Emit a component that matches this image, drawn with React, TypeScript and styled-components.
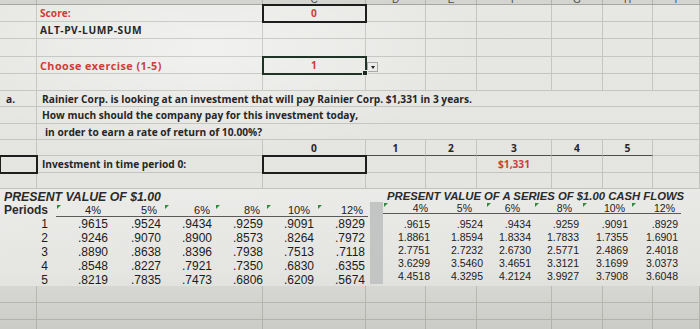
import React from "react";
import styled, { createGlobalStyle, css } from "styled-components";

const COLS = "37px 226px 103px 60px 51px 75px 51px 50px 47px";
const GRID = "rgba(110,110,105,0.28)";
const RED = "#cf3d3a";
const INK = "#262626";

const GlobalStyle = createGlobalStyle`
  html, body { margin: 0; padding: 0; }
  body { width: 700px; height: 329px; overflow: hidden; background: #dcdcd8; }
`;

const Page = styled.div`
  width: 700px;
  height: 329px;
  overflow: hidden;
  display: flex;
  flex-direction: column;
  background:
    radial-gradient(ellipse 55% 45% at 30% 15%, rgba(255, 255, 255, 0.45), rgba(255, 255, 255, 0) 70%),
    linear-gradient(180deg, #e7e7e4 0%, #e4e4e1 55%, #dbdbd7 82%, #cbcbc7 100%);
  font-family: "Open Sans", Lato, sans-serif;
`;

const HeaderStrip = styled.div`
  flex: none;
  display: grid;
  grid-template-columns: ${COLS};
  height: 4px;
  background: #d4d5d1;
  border-bottom: 1px solid #a6a7a3;
  overflow: hidden;
`;

const ColLetter = styled.div`
  border-right: 1px solid #b3b4b0;
  display: flex;
  justify-content: center;
  align-items: flex-end;
  overflow: hidden;
  font: 10px "Liberation Sans", sans-serif;
  color: #4a4a4a;
  span {
    line-height: 10px;
    transform: translateY(1px);
  }
`;

const SheetRow = styled.div<{ $h: number }>`
  flex: none;
  display: grid;
  grid-template-columns: ${COLS};
  height: ${(p) => p.$h}px;
`;

type CellProps = {
  $span?: number;
  $align?: "left" | "center";
  $tone?: "red" | "ink";
  $box?: "dark" | "green";
  $pad?: number;
  $under?: boolean;
  $size?: number;
  $track?: number;
};

const Cell = styled.div<CellProps>`
  grid-column: span ${(p) => p.$span ?? 1};
  position: relative;
  display: flex;
  align-items: center;
  justify-content: ${(p) => (p.$align === "center" ? "center" : "flex-start")};
  padding-left: ${(p) => p.$pad ?? 0}px;
  border-right: 1px solid ${GRID};
  border-bottom: 1px solid ${(p) => (p.$under ? "#4e4e4c" : GRID)};
  white-space: nowrap;
  font-size: ${(p) => p.$size ?? 10.2}px;
  font-weight: 700;
  letter-spacing: ${(p) => p.$track ?? 0}px;
  color: ${(p) => (p.$tone === "red" ? RED : INK)};
  ${(p) =>
    p.$box &&
    css`
      outline: 2px solid ${p.$box === "green" ? "#1f3326" : "#1e1e1e"};
      outline-offset: -1px;
      z-index: 1;
    `}
`;

const DropButton = styled.div`
  position: absolute;
  left: calc(100% + 2px);
  top: 5px;
  width: 11px;
  height: 10px;
  box-sizing: border-box;
  border: 1px solid #a9aaa7;
  background: #ececea;
  display: flex;
  align-items: center;
  justify-content: center;
  &::after {
    content: "";
    border-left: 2.5px solid transparent;
    border-right: 2.5px solid transparent;
    border-top: 3px solid #222;
  }
`;

const FillHandle = styled.div`
  position: absolute;
  right: -3px;
  bottom: -3px;
  width: 4px;
  height: 4px;
  background: #1d2a22;
  border: 1px solid #e8e8e5;
`;

const Tables = styled.div`
  display: flex;
  height: 97px;
  flex: none;
  background: linear-gradient(90deg, rgba(255, 255, 255, 0.3), rgba(255, 255, 255, 0.22));
  font-family: "Liberation Sans", Arial, sans-serif;
  color: #1c1c1c;
`;

const LeftTable = styled.div`
  width: 370px;
  display: grid;
  grid-template-columns: 56px 55px 53px 51px 51px 51px 51px;
  grid-template-rows: 15px 13px repeat(5, 14px);
`;

const RightTable = styled.div`
  width: 300px;
  display: grid;
  grid-template-columns: 50px 53px 48px 48px 49px 50px;
  grid-template-rows: 13px 12px 3px repeat(5, 13px);
`;

const Band = styled.div`
  width: 13px;
  margin-top: 13px;
  height: 82px;
  background: #c3c5c4;
`;

const Title = styled.div<{ $size: number; $cols: number }>`
  grid-column: span ${(p) => p.$cols};
  display: flex;
  align-items: center;
  padding-left: 4px;
  font-size: ${(p) => p.$size}px;
  font-weight: 700;
  font-style: italic;
  white-space: nowrap;
  color: #2a2a2a;
`;

const Head = styled.div<{ $flag?: boolean; $size: number; $line: boolean; $pr?: number }>`
  position: relative;
  display: flex;
  align-items: center;
  justify-content: flex-end;
  padding-right: ${(p) => p.$pr ?? 7}px;
  font-size: ${(p) => p.$size}px;
  border-bottom: 1px solid ${(p) => (p.$line ? "#5a5a58" : "transparent")};
  white-space: nowrap;
  ${(p) =>
    p.$flag &&
    css`
      &::before {
        content: "";
        position: absolute;
        left: 1px;
        top: 1px;
        border-top: 4px solid #2f8a3a;
        border-right: 4px solid transparent;
      }
    `}
`;

const PeriodsHead = styled(Head)`
  justify-content: flex-start;
  padding-left: 4px;
  padding-right: 0;
  font-weight: 700;
  color: #2a2a2a;
`;

const Spacer = styled.div<{ $cols: number }>`
  grid-column: span ${(p) => p.$cols};
`;

const Num = styled.div<{ $size: number; $pad?: number }>`
  display: flex;
  align-items: center;
  justify-content: flex-end;
  padding-right: ${(p) => p.$pad ?? 3}px;
  font-size: ${(p) => p.$size}px;
  white-space: nowrap;
`;

const leftData = [
  [".9615", ".9524", ".9434", ".9259", ".9091", ".8929"],
  [".9246", ".9070", ".8900", ".8573", ".8264", ".7972"],
  [".8890", ".8638", ".8396", ".7938", ".7513", ".7118"],
  [".8548", ".8227", ".7921", ".7350", ".6830", ".6355"],
  [".8219", ".7835", ".7473", ".6806", ".6209", ".5674"],
];

const rightData = [
  [".9615", ".9524", ".9434", ".9259", ".9091", ".8929"],
  ["1.8861", "1.8594", "1.8334", "1.7833", "1.7355", "1.6901"],
  ["2.7751", "2.7232", "2.6730", "2.5771", "2.4869", "2.4018"],
  ["3.6299", "3.5460", "3.4651", "3.3121", "3.1699", "3.0373"],
  ["4.4518", "4.3295", "4.2124", "3.9927", "3.7908", "3.6048"],
];

const rates = ["4%", "5%", "6%", "8%", "10%", "12%"];
const leftHeadPad = [10, 7, 5, 6, 7, 5];
const rightHeadPad = [5, 14, 14, 10, 6, 6];
const letters = ["", "", "C", "D", "E", "F", "G", "H", "I"];

const Blank = ({ n }: { n: number }) => (
  <>
    {Array.from({ length: n }).map((_, i) => (
      <Cell key={i} />
    ))}
  </>
);

export default function App() {
  return (
    <>
      <GlobalStyle />
      <Page>
        <HeaderStrip>
          {letters.map((l, i) => (
            <ColLetter key={i}>
              <span>{l}</span>
            </ColLetter>
          ))}
        </HeaderStrip>

        <SheetRow $h={17}>
          <Cell />
          <Cell $tone="red" $pad={3}>Score:</Cell>
          <Cell $tone="red" $align="center" $box="dark">0</Cell>
          <Blank n={6} />
        </SheetRow>
        <SheetRow $h={17}>
          <Cell />
          <Cell $pad={3} $track={0.55}>ALT-PV-LUMP-SUM</Cell>
          <Blank n={7} />
        </SheetRow>
        <SheetRow $h={18}>
          <Blank n={9} />
        </SheetRow>
        <SheetRow $h={17}>
          <Cell />
          <Cell $tone="red" $pad={3} $size={10.8} $track={0.45}>Choose exercise (1-5)</Cell>
          <Cell $tone="red" $align="center" $box="green">
            1
            <DropButton />
            <FillHandle />
          </Cell>
          <Blank n={6} />
        </SheetRow>
        <SheetRow $h={17}>
          <Blank n={9} />
        </SheetRow>
        <SheetRow $h={16}>
          <Cell $pad={6}>a.</Cell>
          <Cell $span={8} $pad={5}>
            Rainier Corp. is looking at an investment that will pay Rainier Corp. $1,331 in 3 years.
          </Cell>
        </SheetRow>
        <SheetRow $h={17}>
          <Cell />
          <Cell $span={8} $pad={5}>
            How much should the company pay for this investment today,
          </Cell>
        </SheetRow>
        <SheetRow $h={16}>
          <Cell />
          <Cell $span={8} $pad={8}>
            in order to earn a rate of return of 10.00%?
          </Cell>
        </SheetRow>
        <SheetRow $h={16}>
          <Cell />
          <Cell />
          <Cell $align="center">0</Cell>
          {[1, 2, 3, 4, 5].map((n) => (
            <Cell key={n} $align="center" $under>
              {n}
            </Cell>
          ))}
          <Cell />
        </SheetRow>
        <SheetRow $h={17}>
          <Cell $box="dark" />
          <Cell $pad={5}>Investment in time period 0:</Cell>
          <Cell $box="dark" />
          <Cell />
          <Cell />
          <Cell $tone="red" $align="center">$1,331</Cell>
          <Blank n={3} />
        </SheetRow>
        <SheetRow $h={16}>
          <Blank n={9} />
        </SheetRow>

        <Tables>
          <LeftTable>
            <Title $size={12.3} $cols={7}>PRESENT VALUE OF $1.00</Title>
            <PeriodsHead $size={12} $line={false} $flag={false}>
              Periods
            </PeriodsHead>
            {rates.map((r, i) => (
              <Head key={r} $size={11} $line $flag={i !== 1} $pr={leftHeadPad[i]}>
                {r}
              </Head>
            ))}
            {leftData.map((row, ri) => (
              <React.Fragment key={ri}>
                <Num $size={12} $pad={8}>
                  {ri + 1}
                </Num>
                {row.map((v, ci) => (
                  <Num key={ci} $size={12}>
                    {v}
                  </Num>
                ))}
              </React.Fragment>
            ))}
          </LeftTable>
          <Band />
          <RightTable>
            <Title $size={11.3} $cols={6}>PRESENT VALUE OF A SERIES OF $1.00 CASH FLOWS</Title>
            {rates.map((r, i) => (
              <Head key={r} $size={10.5} $line $flag={i !== 1} $pr={rightHeadPad[i]}>
                {r}
              </Head>
            ))}
            <Spacer $cols={6} />
            {rightData.map((row, ri) => (
              <React.Fragment key={ri}>
                {row.map((v, ci) => (
                  <Num key={ci} $size={10.5}>
                    {v}
                  </Num>
                ))}
              </React.Fragment>
            ))}
          </RightTable>
        </Tables>

        <SheetRow $h={17}>
          <Blank n={9} />
        </SheetRow>
        <SheetRow $h={17}>
          <Blank n={9} />
        </SheetRow>
        <SheetRow $h={17}>
          <Blank n={9} />
        </SheetRow>
      </Page>
    </>
  );
}
